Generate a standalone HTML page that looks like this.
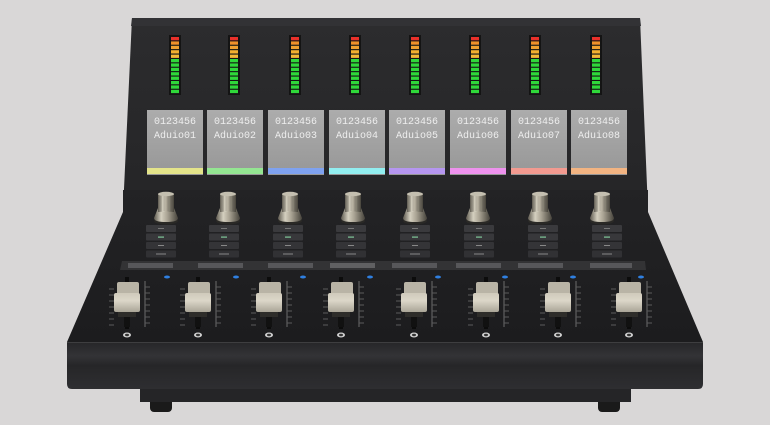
<!DOCTYPE html>
<html><head><meta charset="utf-8"><style>
html,body{margin:0;padding:0;background:#d9d7d7;width:770px;height:425px;overflow:hidden}
svg{display:block}
.t{font-family:"Liberation Mono","DejaVu Sans Mono",monospace;font-size:10px;fill:#eeeeee;text-anchor:middle}
</style></head><body>
<svg width="770" height="425" viewBox="0 0 770 425" xmlns="http://www.w3.org/2000/svg">
<defs>
<linearGradient id="top" x1="0" y1="0" x2="0" y2="1"><stop offset="0" stop-color="#2c2c2e"/><stop offset="1" stop-color="#252527"/></linearGradient>
<linearGradient id="deck" x1="0" y1="0" x2="0" y2="1"><stop offset="0" stop-color="#232325"/><stop offset="1" stop-color="#1c1c1e"/></linearGradient>
<linearGradient id="front" x1="0" y1="0" x2="0" y2="1"><stop offset="0" stop-color="#262628"/><stop offset="0.3" stop-color="#333336"/><stop offset="0.5" stop-color="#262628"/><stop offset="1" stop-color="#2e2e31"/></linearGradient>
<linearGradient id="disp" x1="0" y1="0" x2="0" y2="1"><stop offset="0" stop-color="#acacac"/><stop offset="1" stop-color="#979797"/></linearGradient>
<linearGradient id="knob" x1="0" y1="0" x2="1" y2="0"><stop offset="0" stop-color="#5e5a50"/><stop offset="0.3" stop-color="#d4cfbf"/><stop offset="0.55" stop-color="#aaa494"/><stop offset="1" stop-color="#46433b"/></linearGradient>
<linearGradient id="cap" x1="0" y1="0" x2="0" y2="1"><stop offset="0" stop-color="#cfcabb"/><stop offset="0.4" stop-color="#dcd7c9"/><stop offset="1" stop-color="#aaa597"/></linearGradient>
<g id="meter">
<rect x="-6" y="-2" width="12" height="60" fill="#141414"/>
<rect x="-4" y="0" width="8" height="3.3" fill="#e8302a"/>
<rect x="-4" y="4.4" width="8" height="3.3" fill="#f0902a"/>
<rect x="-4" y="8.8" width="8" height="3.3" fill="#f0a030"/>
<rect x="-4" y="13.2" width="8" height="3.3" fill="#f2b030"/>
<rect x="-4" y="17.6" width="8" height="3.3" fill="#f2b838"/>
<g fill="#2fd83a">
<rect x="-4" y="22" width="8" height="3.3"/><rect x="-4" y="26.4" width="8" height="3.3"/><rect x="-4" y="30.8" width="8" height="3.3"/><rect x="-4" y="35.2" width="8" height="3.3"/><rect x="-4" y="39.6" width="8" height="3.3"/><rect x="-4" y="44" width="8" height="3.3"/><rect x="-4" y="48.4" width="8" height="3.3"/><rect x="-4" y="52.8" width="8" height="3.3"/>
</g></g>
<g id="knobg">
<ellipse cx="0" cy="27" rx="12" ry="3.5" fill="#2a2926"/>
<path d="M-8 14 L-12 24 Q-12 28 0 28 Q12 28 12 24 L8 14 Z" fill="url(#knob)"/>
<rect x="-8" y="0" width="16" height="18" fill="url(#knob)"/>
<g stroke="#00000022" stroke-width="0.8"><line x1="-5" y1="1" x2="-5" y2="17"/><line x1="-2" y1="1" x2="-2" y2="17"/><line x1="2" y1="1" x2="2" y2="17"/><line x1="5" y1="1" x2="5" y2="17"/></g>
<ellipse cx="0" cy="0" rx="8" ry="2.2" fill="#c4bfb0"/>
</g>
<g id="btns">
<rect x="-15" y="0" width="30" height="7" rx="1" fill="#3a3a3d"/>
<rect x="-15" y="8.5" width="30" height="7" rx="1" fill="#38383b"/>
<rect x="-15" y="17" width="30" height="7" rx="1" fill="#343437"/>
<rect x="-15" y="25.5" width="30" height="7" rx="1" fill="#313134"/>
<rect x="-3" y="3" width="6" height="1" fill="#777"/>
<rect x="-3" y="11.5" width="6" height="1.2" fill="#7fc89a"/>
<rect x="-3" y="20" width="6" height="1" fill="#888"/>
<rect x="-5" y="28.5" width="10" height="1" fill="#888"/>
</g>
<g id="fader">
<rect x="-2" y="-6" width="4" height="52" fill="#0c0c0c"/>
<rect x="-3" y="30" width="6" height="14" fill="#111"/>
<g stroke="#5c5c5c" stroke-width="1">
<line x1="-18" y1="6" x2="-13" y2="6"/><line x1="-18" y1="12" x2="-13" y2="12"/><line x1="-18" y1="18" x2="-13" y2="18"/><line x1="-18" y1="24" x2="-13" y2="24"/><line x1="-18" y1="30" x2="-13" y2="30"/><line x1="-18" y1="36" x2="-13" y2="36"/><line x1="-18" y1="42" x2="-13" y2="42"/>
<line x1="18" y1="-2" x2="18" y2="44" stroke="#6c6c6c"/>
<line x1="18" y1="4" x2="23" y2="4"/><line x1="18" y1="10" x2="23" y2="10"/><line x1="18" y1="16" x2="23" y2="16"/><line x1="18" y1="22" x2="23" y2="22"/><line x1="18" y1="28" x2="23" y2="28"/><line x1="18" y1="34" x2="23" y2="34"/><line x1="18" y1="40" x2="23" y2="40"/>
</g>
<rect x="-10" y="-1" width="22" height="13" rx="2" fill="#b9b4a6"/>
<rect x="-13" y="10" width="26" height="19" rx="2" fill="url(#cap)"/>
<rect x="-9" y="29" width="18" height="5" fill="#2e2d2a"/>
<ellipse cx="0" cy="52" rx="4" ry="2.5" fill="#cfcfcf"/><ellipse cx="0" cy="52" rx="2" ry="1.2" fill="#333"/>
</g>
</defs>

<rect x="150" y="396" width="22" height="16" rx="4" fill="#1a1a1a"/>
<rect x="598" y="396" width="22" height="16" rx="4" fill="#1a1a1a"/>
<rect x="140" y="386" width="491" height="16" fill="#252527"/>
<path d="M132 18 L640 18 L648 210 L123 210 Z" fill="url(#top)"/>
<path d="M132 18 L640 18 L641 26 L131 26 Z" fill="#323235"/>
<path d="M123 190 L648 190 L648 212 L703 342 L67 342 L123 212 Z" fill="url(#deck)"/>
<path d="M67 342 L703 342 L703 384 Q703 389 698 389 L72 389 Q67 389 67 384 Z" fill="url(#front)"/>
<line x1="67" y1="342.5" x2="703" y2="342.5" stroke="#3e3e40" stroke-width="1"/>

<use href="#meter" x="175" y="37"/><use href="#meter" x="234" y="37"/><use href="#meter" x="295" y="37"/><use href="#meter" x="355" y="37"/>
<use href="#meter" x="415" y="37"/><use href="#meter" x="475" y="37"/><use href="#meter" x="535" y="37"/><use href="#meter" x="596" y="37"/>

<g>
<rect x="147" y="110" width="56" height="65" fill="url(#disp)"/><rect x="147" y="168" width="56" height="6" fill="#e4e48a"/>
<rect x="207" y="110" width="56" height="65" fill="url(#disp)"/><rect x="207" y="168" width="56" height="6" fill="#94e692"/>
<rect x="268" y="110" width="56" height="65" fill="url(#disp)"/><rect x="268" y="168" width="56" height="6" fill="#7fa2f0"/>
<rect x="329" y="110" width="56" height="65" fill="url(#disp)"/><rect x="329" y="168" width="56" height="6" fill="#92eef0"/>
<rect x="389" y="110" width="56" height="65" fill="url(#disp)"/><rect x="389" y="168" width="56" height="6" fill="#b596f0"/>
<rect x="450" y="110" width="56" height="65" fill="url(#disp)"/><rect x="450" y="168" width="56" height="6" fill="#ee92ee"/>
<rect x="511" y="110" width="56" height="65" fill="url(#disp)"/><rect x="511" y="168" width="56" height="6" fill="#f29a90"/>
<rect x="571" y="110" width="56" height="65" fill="url(#disp)"/><rect x="571" y="168" width="56" height="6" fill="#f2b482"/>
</g>
<text class="t" x="175" y="124">0123456</text><text class="t" x="175" y="138">Aduio01</text>
<text class="t" x="235" y="124">0123456</text><text class="t" x="235" y="138">Aduio02</text>
<text class="t" x="296" y="124">0123456</text><text class="t" x="296" y="138">Aduio03</text>
<text class="t" x="357" y="124">0123456</text><text class="t" x="357" y="138">Aduio04</text>
<text class="t" x="417" y="124">0123456</text><text class="t" x="417" y="138">Aduio05</text>
<text class="t" x="478" y="124">0123456</text><text class="t" x="478" y="138">Aduio06</text>
<text class="t" x="539" y="124">0123456</text><text class="t" x="539" y="138">Aduio07</text>
<text class="t" x="599" y="124">0123456</text><text class="t" x="599" y="138">Aduio08</text>

<use href="#knobg" x="166" y="194"/><use href="#knobg" x="228" y="194"/><use href="#knobg" x="290" y="194"/><use href="#knobg" x="353" y="194"/>
<use href="#knobg" x="415" y="194"/><use href="#knobg" x="478" y="194"/><use href="#knobg" x="540" y="194"/><use href="#knobg" x="602" y="194"/>

<use href="#btns" x="161" y="225"/><use href="#btns" x="224" y="225"/><use href="#btns" x="288" y="225"/><use href="#btns" x="351" y="225"/>
<use href="#btns" x="415" y="225"/><use href="#btns" x="479" y="225"/><use href="#btns" x="543" y="225"/><use href="#btns" x="607" y="225"/>

<path d="M122 261 L645 261 L646 270 L120 270 Z" fill="#333335"/>
<rect x="128" y="263" width="45" height="5" fill="#57575a"/><rect x="198" y="263" width="45" height="5" fill="#57575a"/>
<rect x="268" y="263" width="45" height="5" fill="#57575a"/><rect x="330" y="263" width="45" height="5" fill="#606062"/>
<rect x="392" y="263" width="45" height="5" fill="#57575a"/><rect x="456" y="263" width="45" height="5" fill="#57575a"/>
<rect x="518" y="263" width="45" height="5" fill="#57575a"/><rect x="590" y="263" width="42" height="5" fill="#57575a"/>

<g fill="#2f7fe0">
<ellipse cx="167" cy="277" rx="3" ry="1.5"/><ellipse cx="236" cy="277" rx="3" ry="1.5"/><ellipse cx="303" cy="277" rx="3" ry="1.5"/><ellipse cx="370" cy="277" rx="3" ry="1.5"/>
<ellipse cx="438" cy="277" rx="3" ry="1.5"/><ellipse cx="505" cy="277" rx="3" ry="1.5"/><ellipse cx="573" cy="277" rx="3" ry="1.5"/><ellipse cx="641" cy="277" rx="3" ry="1.5"/>
</g>

<use href="#fader" x="127" y="283"/><use href="#fader" x="198" y="283"/><use href="#fader" x="269" y="283"/><use href="#fader" x="341" y="283"/>
<use href="#fader" x="414" y="283"/><use href="#fader" x="486" y="283"/><use href="#fader" x="558" y="283"/><use href="#fader" x="629" y="283"/>
</svg>
</body></html>
